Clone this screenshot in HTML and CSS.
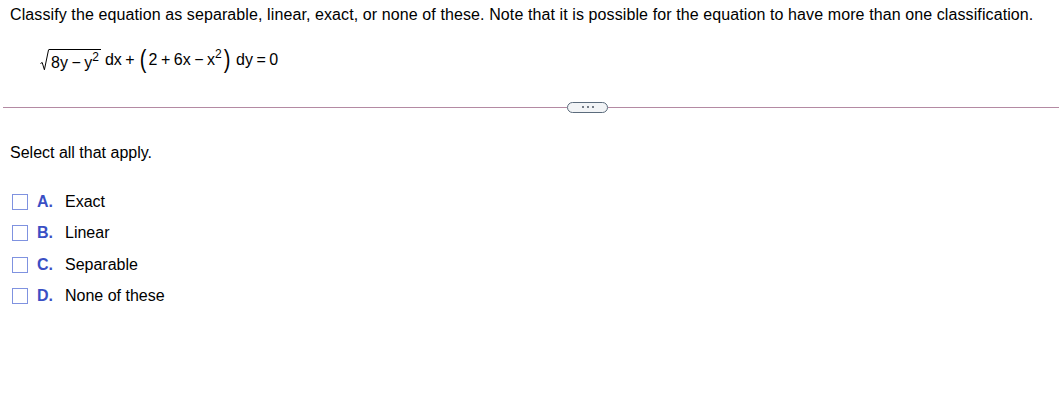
FILE: index.html
```html
<!DOCTYPE html>
<html>
<head>
<meta charset="utf-8">
<link rel="stylesheet" href="styles.css">
</head>
<body>
<div class="page">
  <p class="question">Classify the equation as separable, linear, exact, or none of these. Note that it is possible for the equation to have more than one classification.</p>
  <div class="equation">
    <span class="radical">
      <svg class="rad-sign" width="9" height="22" viewBox="0 0 9 22"><path d="M0.5 14.5 L2.2 13.5 L4.4 20.8 L8.6 0.5" fill="none" stroke="#000" stroke-width="1"/></svg>
      <span class="radicand">8y<span class="op">&minus;</span>y<sup>2</sup></span>
    </span>
    <span class="t gap">dx</span><span class="op">+</span>
    <span class="paren">(</span><span class="t">2<span class="op">+</span>6x<span class="op">&minus;</span>x<sup>2</sup></span><span class="paren">)</span>
    <span class="t gap">dy<span class="op">=</span>0</span>
  </div>
  <div class="divider">
    <div class="rule"></div>
    <button class="more"><span></span><span></span><span></span></button>
    <div class="rule"></div>
  </div>
  <p class="instruction">Select all that apply.</p>
  <ul class="options">
    <li><span class="box"></span><span class="letter">A.</span><span class="label">Exact</span></li>
    <li><span class="box"></span><span class="letter">B.</span><span class="label">Linear</span></li>
    <li><span class="box"></span><span class="letter">C.</span><span class="label">Separable</span></li>
    <li><span class="box"></span><span class="letter">D.</span><span class="label">None of these</span></li>
  </ul>
</div>
</body>
</html>
```
FILE: styles.css
```css
html, body {
  margin: 0;
  padding: 0;
  background: #fff;
}
body {
  font-family: "Liberation Sans", Arial, sans-serif;
  font-size: 16px;
  color: #000;
}
.page {
  padding: 6px 0 0 0;
}
.question {
  margin: 0 0 0 10px;
  line-height: 18px;
  letter-spacing: 0.1px;
}
.equation {
  display: flex;
  align-items: center;
  margin: 22px 0 0 40px;
  height: 28px;
}
.radical {
  display: flex;
  align-items: flex-end;
}
.rad-sign {
  display: block;
  margin-bottom: 1px;
}
.radicand {
  border-top: 1px solid #000;
  padding: 4px 2px 0 2px;
  line-height: 18px;
}
.op {
  margin: 0 3.5px;
}
.gap {
  margin-left: 4px;
}
sup {
  font-size: 12px;
  line-height: 0;
  vertical-align: 7px;
}
.t {
  white-space: pre;
  line-height: 18px;
}
.paren {
  font-size: 25px;
  line-height: 28px;
  transform: scaleX(0.8);
  display: inline-block;
  margin: -2px 1px 0 1px;
}
.divider {
  display: flex;
  align-items: center;
  margin: 27px 0 0 3px;
  height: 12px;
}
.rule {
  flex: 1;
  height: 1px;
  background: #b48aa3;
}
.more {
  width: 41px;
  height: 11px;
  border: 1px solid #5b6b7c;
  border-radius: 6px;
  background: #f2f4f6;
  padding: 0;
  display: flex;
  justify-content: center;
  align-items: center;
  gap: 3px;
  box-sizing: border-box;
}
.more span {
  width: 2px;
  height: 2px;
  background: #4a5562;
  border-radius: 1px;
}
.divider .rule:last-child {
  flex: 0 0 451px;
}
.instruction {
  margin: 31px 0 0 10px;
  line-height: 18px;
}
.options {
  list-style: none;
  margin: 31px 0 0 0;
  padding: 0 0 0 12px;
  display: flex;
  flex-direction: column;
  gap: 13.33px;
}
.options li {
  display: flex;
  align-items: center;
  height: 18px;
  line-height: 18px;
}
.box {
  width: 14px;
  height: 14px;
  border: 1.5px solid #7f92e0;
  box-sizing: content-box;
  margin-right: 9px;
}
.letter {
  color: #3a4fc4;
  font-weight: bold;
  width: 28px;
}
.label {
  color: #000;
}
```
